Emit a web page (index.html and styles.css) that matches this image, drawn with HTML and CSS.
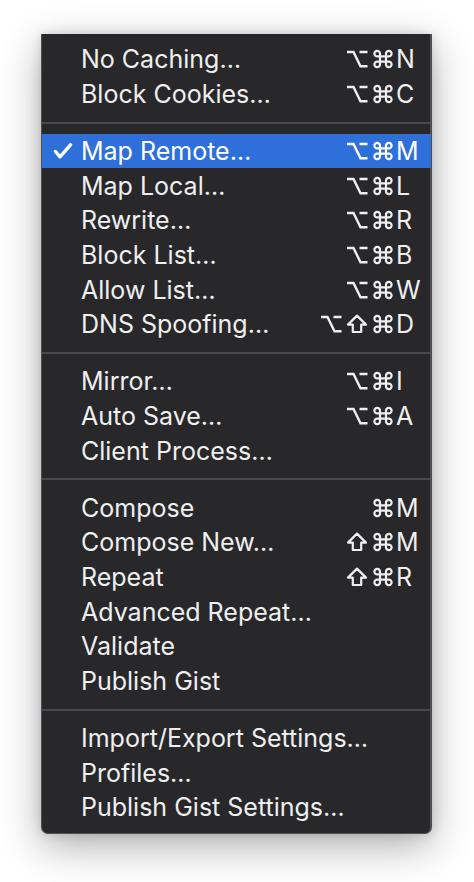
FILE: index.html
```html
<!DOCTYPE html>
<html lang="en">
<head>
<meta charset="utf-8">
<title>Tools menu</title>
<link rel="stylesheet" href="styles.css">
</head>
<body>
<svg width="0" height="0" class="defs">
  <defs>
    <symbol id="opt" viewBox="0 0 22 20"><path d="M1 3H7.5L14.5 17.2H21.5M13.5 3H21.5" fill="none" stroke="currentColor" stroke-width="2.4"/></symbol>
    <symbol id="cmd" viewBox="0 0 22 20"><path d="M8 7V4.6A2.8 2.8 0 1 0 5.4 7.4H16.6A2.8 2.8 0 1 0 14 4.6V15.4A2.8 2.8 0 1 0 16.6 12.6H5.4A2.8 2.8 0 1 0 8 15.4Z" fill="none" stroke="currentColor" stroke-width="2.2" stroke-linejoin="round"/></symbol>
    <symbol id="shift" viewBox="0 0 22 20"><path d="M11 1.6L20 10.6H15.2V18H6.8V10.6H2Z" fill="none" stroke="currentColor" stroke-width="2.2" stroke-linejoin="round"/></symbol>
  </defs>
</svg>
<div class="menu">
  <div class="item"><span class="label">No Caching…</span><span class="mods"><svg class="mod"><use href="#opt"/></svg><svg class="mod"><use href="#cmd"/></svg></span><span class="key">N</span></div>
  <div class="item"><span class="label">Block Cookies…</span><span class="mods"><svg class="mod"><use href="#opt"/></svg><svg class="mod"><use href="#cmd"/></svg></span><span class="key">C</span></div>
  <div class="sep"></div>
  <div class="item selected"><svg class="check" viewBox="0 0 20 16"><path d="M2.5 8.5L7 13.8L17.5 1.8" fill="none" stroke="currentColor" stroke-width="3.4" stroke-linecap="round" stroke-linejoin="round"/></svg><span class="label">Map Remote…</span><span class="mods"><svg class="mod"><use href="#opt"/></svg><svg class="mod"><use href="#cmd"/></svg></span><span class="key">M</span></div>
  <div class="item"><span class="label">Map Local…</span><span class="mods"><svg class="mod"><use href="#opt"/></svg><svg class="mod"><use href="#cmd"/></svg></span><span class="key">L</span></div>
  <div class="item"><span class="label">Rewrite…</span><span class="mods"><svg class="mod"><use href="#opt"/></svg><svg class="mod"><use href="#cmd"/></svg></span><span class="key">R</span></div>
  <div class="item"><span class="label">Block List…</span><span class="mods"><svg class="mod"><use href="#opt"/></svg><svg class="mod"><use href="#cmd"/></svg></span><span class="key">B</span></div>
  <div class="item"><span class="label">Allow List…</span><span class="mods"><svg class="mod"><use href="#opt"/></svg><svg class="mod"><use href="#cmd"/></svg></span><span class="key">W</span></div>
  <div class="item"><span class="label">DNS Spoofing…</span><span class="mods"><svg class="mod"><use href="#opt"/></svg><svg class="mod"><use href="#shift"/></svg><svg class="mod"><use href="#cmd"/></svg></span><span class="key">D</span></div>
  <div class="sep"></div>
  <div class="item"><span class="label">Mirror…</span><span class="mods"><svg class="mod"><use href="#opt"/></svg><svg class="mod"><use href="#cmd"/></svg></span><span class="key">I</span></div>
  <div class="item"><span class="label">Auto Save…</span><span class="mods"><svg class="mod"><use href="#opt"/></svg><svg class="mod"><use href="#cmd"/></svg></span><span class="key">A</span></div>
  <div class="item"><span class="label">Client Process…</span></div>
  <div class="sep"></div>
  <div class="item"><span class="label">Compose</span><span class="mods"><svg class="mod"><use href="#cmd"/></svg></span><span class="key">M</span></div>
  <div class="item"><span class="label">Compose New…</span><span class="mods"><svg class="mod"><use href="#shift"/></svg><svg class="mod"><use href="#cmd"/></svg></span><span class="key">M</span></div>
  <div class="item"><span class="label">Repeat</span><span class="mods"><svg class="mod"><use href="#shift"/></svg><svg class="mod"><use href="#cmd"/></svg></span><span class="key">R</span></div>
  <div class="item"><span class="label">Advanced Repeat…</span></div>
  <div class="item"><span class="label">Validate</span></div>
  <div class="item"><span class="label">Publish Gist</span></div>
  <div class="sep"></div>
  <div class="item"><span class="label">Import/Export Settings…</span></div>
  <div class="item"><span class="label">Profiles…</span></div>
  <div class="item"><span class="label">Publish Gist Settings…</span></div>
</div>
</body>
</html>
```
FILE: styles.css
```css
html, body {
  margin: 0;
  padding: 0;
  background: #ffffff;
}
body {
  min-height: 882px;
  padding-top: 34px;
  box-sizing: border-box;
}
.defs {
  position: absolute;
  width: 0;
  height: 0;
  overflow: hidden;
}
.menu {
  box-sizing: border-box;
  width: 391px;
  margin: 0 0 50px 41px;
  padding: 8px 0 8px 0;
  background: #28282b;
  border: 1px solid #4f4f53;
  border-top: none;
  border-right-width: 2px;
  border-radius: 0 0 7px 7px;
  box-shadow: 0 12px 40px rgba(0, 0, 0, 0.32), 0 0 12px rgba(0, 0, 0, 0.14);
  font-family: Inter, "Noto Sans", sans-serif;
  font-size: 25px;
  color: #efefef;
}
.item {
  position: relative;
  display: flex;
  align-items: center;
  height: 34.6px;
  padding: 0 13px 0 39px;
  margin-right: -1px;
}
.item.selected {
  background: #2f6fda;
  color: #ffffff;
}
.check {
  position: absolute;
  left: 11px;
  top: 9px;
  width: 20px;
  height: 16px;
}
.label {
  flex: 1;
  white-space: nowrap;
}
.mods {
  display: flex;
  align-items: center;
  gap: 4px;
}
.mod {
  width: 22px;
  height: 20px;
  color: inherit;
}
.key {
  width: 22px;
  margin-left: 2px;
  text-align: left;
}
.sep {
  height: 22.7px;
  display: flex;
  align-items: center;
}
.sep::before {
  content: "";
  display: block;
  width: 100%;
  height: 2px;
  background: #4a4a4e;
}
```
